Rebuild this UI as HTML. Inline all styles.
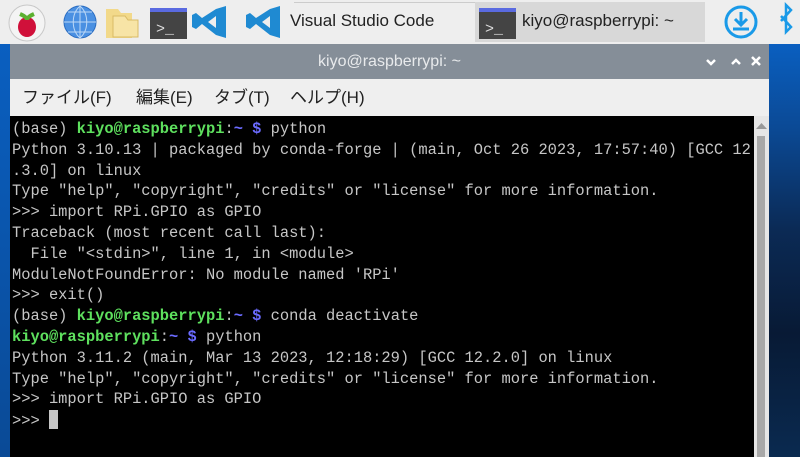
<!DOCTYPE html>
<html><head><meta charset="utf-8"><style>
*{margin:0;padding:0;box-sizing:border-box}
body{width:800px;height:457px;overflow:hidden;position:relative;background:#0a3d7a;font-family:"Liberation Sans","Noto Sans CJK JP",sans-serif}
#wall{position:absolute;left:769px;top:44px;width:31px;height:413px;background:linear-gradient(180deg,#0a5fc0 0%,#0b4a96 20%,#0b2a55 45%,#081a35 70%,#0a2a50 100%)}
#leftb{position:absolute;left:0;top:44px;width:10px;height:413px;background:linear-gradient(180deg,#0a5fc0,#0a4a96)}
#panel{position:absolute;left:0;top:0;width:800px;height:44px;background:#eeeeee}
#title{position:absolute;left:10px;top:44px;width:759px;height:35px;background:#858e98;color:#e8eaec;font-size:16px;text-align:center;line-height:35px}
#menu{position:absolute;left:10px;top:79px;width:759px;height:37px;background:#efefef;font-size:17px;color:#222;line-height:37px}
#menu span{position:absolute;top:0}
#term{position:absolute;left:10px;top:116px;width:744px;height:341px;background:#000}
#sb{position:absolute;left:754px;top:116px;width:15px;height:341px;background:#e6e6e6}
#sb .th{position:absolute;left:3px;top:20px;width:8px;height:321px;background:#a8a8a8}
pre{position:absolute;left:12px;top:119px;font-family:"Liberation Mono",monospace;font-size:15.4px;line-height:20.8px;color:#c6c6c6}
.g{color:#5ee05e;font-weight:bold}.b{color:#6b6bff;font-weight:bold}
.cur{display:inline-block;width:9px;height:19px;background:#c6c6c6;vertical-align:-4px}
</style></head><body>
<div id="panel">
 <svg width="800" height="44" style="position:absolute;left:0;top:0">
  <circle cx="27" cy="23" r="18" fill="#f4f4f4" stroke="#c8c8c8"/>
  <ellipse cx="27" cy="27" rx="9" ry="10" fill="#d0103a"/>
  <path d="M20 14 q7 3 7 6 q0 -3 7 -6" stroke="#5cb030" stroke-width="4" fill="none"/>
  <circle cx="80" cy="22" r="16" fill="#4a90e2" stroke="#2a6cc0"/>
  <path d="M64 22h32M80 6v32M68 12h24M68 32h24M80 6c-9 8-9 24 0 32M80 6c9 8 9 24 0 32" stroke="#bcd8f6" fill="none"/>
  <path d="M106 9h12l3 4h11v25h-26z" fill="#f2d98a"/>
  <path d="M113 16h12l3 4h10v17h-25z" fill="#f7e4a6" stroke="#d9bb66"/>
  <rect x="150" y="8" width="37" height="31" fill="#444"/><rect x="150" y="8" width="37" height="4" fill="#5a6ae0"/>
  <text x="156" y="33" fill="#ddd" font-size="15" font-family="Liberation Mono">&gt;_</text>
  <path d="M216 9 l10 -3 l0 32 l-10 -3 l-14 -11 l-6 5 l-4-2 v-12 l4-2 l6 5z M216 16 l-8 6 l8 6z" fill="#1f8ad2"/>
  <path d="M270 9 l10 -3 l0 32 l-10 -3 l-14 -11 l-6 5 l-4-2 v-12 l4-2 l6 5z M270 16 l-8 6 l8 6z" fill="#1f8ad2"/>
  <rect x="294" y="2" width="338" height="1" fill="#ccc"/>
  <rect x="475" y="2" width="230" height="40" fill="#d8d8d8"/>
  <rect x="479" y="8" width="37" height="31" fill="#444"/><rect x="479" y="8" width="37" height="4" fill="#5a6ae0"/>
  <text x="485" y="33" fill="#ddd" font-size="15" font-family="Liberation Mono">&gt;_</text>
  <circle cx="741" cy="22" r="15" fill="none" stroke="#1a9ae8" stroke-width="3"/>
  <path d="M741 12v12M735 19l6 6 6-6M733 29h16" stroke="#1a9ae8" stroke-width="3" fill="none"/>
  <path d="M781 16l10 11-5 5v-27l5 5-10 11" stroke="#1a9ae8" stroke-width="2.5" fill="none"/>
 </svg>
 <div style="position:absolute;left:290px;top:11px;font-size:17px;color:#222">Visual Studio Code</div>
 <div style="position:absolute;left:522px;top:11px;font-size:17px;color:#222">kiyo@raspberrypi: ~</div>
</div>
<div id="leftb"></div><div id="wall"></div>
<div id="title">kiyo@raspberrypi: ~
 <svg width="80" height="35" style="position:absolute;left:690px;top:0"><path d="M7 16l4 4 4-4M32 20l4-4 4 4M52 13l8 8M60 13l-8 8" stroke="#fff" stroke-width="2.5" fill="none"/></svg>
</div>
<div id="menu"><span style="left:12px">ファイル(F)</span><span style="left:126px">編集(E)</span><span style="left:204px">タブ(T)</span><span style="left:280px">ヘルプ(H)</span></div>
<div id="term"></div>
<div id="sb"><svg width="15" height="12" style="position:absolute;top:4px"><path d="M2 9l5.5-6 5.5 6z" fill="#999"/></svg><div class="th"></div></div>
<pre>(base) <span class="g">kiyo@raspberrypi</span>:<span class="b">~ $</span> python
Python 3.10.13 | packaged by conda-forge | (main, Oct 26 2023, 17:57:40) [GCC 12
.3.0] on linux
Type "help", "copyright", "credits" or "license" for more information.
&gt;&gt;&gt; import RPi.GPIO as GPIO
Traceback (most recent call last):
  File "&lt;stdin&gt;", line 1, in &lt;module&gt;
ModuleNotFoundError: No module named 'RPi'
&gt;&gt;&gt; exit()
(base) <span class="g">kiyo@raspberrypi</span>:<span class="b">~ $</span> conda deactivate
<span class="g">kiyo@raspberrypi</span>:<span class="b">~ $</span> python
Python 3.11.2 (main, Mar 13 2023, 12:18:29) [GCC 12.2.0] on linux
Type "help", "copyright", "credits" or "license" for more information.
&gt;&gt;&gt; import RPi.GPIO as GPIO
&gt;&gt;&gt; <span class="cur"></span></pre>
</body></html>
